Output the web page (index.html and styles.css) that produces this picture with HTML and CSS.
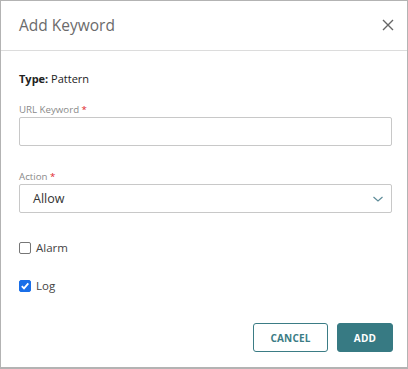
FILE: index.html
```html
<!DOCTYPE html>
<html lang="en">
<head>
    <meta charset="UTF-8">
    <title>Add Keyword</title>
    <link rel="stylesheet" href="styles.css">
</head>
<body>
    <div class="dialog">
        <!-- header -->
        <div class="dialog-header">
            <span class="dialog-title">Add Keyword</span>
            <svg class="close" width="12" height="12" viewBox="0 0 12 12">
                <path d="M1 1 L11 11 M11 1 L1 11" stroke="#666" stroke-width="1.4" fill="none"/>
            </svg>
        </div>

        <div class="dialog-body">
            <div class="type-row"><b>Type:</b> Pattern</div>

            <div class="field">
                <label class="field-label">URL Keyword <span class="req">*</span></label>
                <div class="input"></div>
            </div>

            <div class="field action-field">
                <label class="field-label">Action <span class="req">*</span></label>
                <div class="input dropdown">
                    <span class="dropdown-value">Allow</span>
                    <svg width="12" height="8" viewBox="0 0 12 8">
                        <path d="M1.5 2 L6 6 L10.5 2" stroke="#5e8c99" stroke-width="1.2" fill="none"/>
                    </svg>
                </div>
            </div>

            <div class="check-row alarm">
                <span class="box"></span>
                <span>Alarm</span>
            </div>
            <div class="check-row log">
                <span class="box checked">
                    <svg width="10" height="10" viewBox="0 0 10 10">
                        <path d="M1.8 5.2 L4 7.4 L8.3 2.4" stroke="#fff" stroke-width="1.8" fill="none"/>
                    </svg>
                </span>
                <span>Log</span>
            </div>
        </div>

        <div class="dialog-footer">
            <button class="btn btn-outline">CANCEL</button>
            <button class="btn btn-primary">ADD</button>
        </div>
    </div>
</body>
</html>
```

FILE: styles.css
```css
body {
    margin: 0;
    padding: 0;
    background: #fff;
    font-family: "Open Sans", "Noto Sans", sans-serif;
}

/* dialog frame */
.dialog {
    width: 408px;
    height: 369px;
    box-sizing: border-box;
    border: 1px solid #b3b3b3;
    border-bottom-width: 2px;
    background: #fff;
    display: flex;
    flex-direction: column;
}

.dialog-header {
    height: 50px;
    box-sizing: border-box;
    padding: 0 13px 2px 18px;
    display: flex;
    justify-content: space-between;
    align-items: center;
    border-bottom: 1px solid #dcdcdc;
}

.dialog-title {
    font-size: 15.5px;
    color: #6b6b6b;
}

.close {
    margin-top: 1px;
}

.dialog-body {
    padding: 19px 15px 0 18px;
    display: flex;
    flex-direction: column;
}

.type-row {
    font-size: 11px;
    line-height: 18px;
    color: #222;
}

.type-row b {
    font-weight: 700;
}

.field {
    margin-top: 14px;
    display: flex;
    flex-direction: column;
}

.action-field {
    margin-top: 23px;
}

.field-label {
    font-size: 9.7px;
    line-height: 15px;
    color: #8a8a8a;
}

.req {
    color: #e0262b;
}

.input {
    height: 29px;
    box-sizing: border-box;
    border: 1px solid #c8c8c8;
    border-radius: 2px;
}

.dropdown {
    display: flex;
    align-items: center;
    padding-right: 7px;
}

.dropdown-value {
    flex: 1;
    margin-left: 13px;
    font-size: 12.5px;
    color: #333;
}

/* checkboxes */
.check-row {
    display: flex;
    align-items: center;
    gap: 5px;
    font-size: 11.5px;
    line-height: 18px;
    color: #444;
}

.check-row.alarm {
    margin-top: 26px;
}

.check-row.log {
    margin-top: 20px;
}

.box {
    width: 12px;
    height: 12px;
    box-sizing: border-box;
    border: 1px solid #767676;
    border-radius: 2px;
    display: flex;
    justify-content: center;
    align-items: center;
}

.box.checked {
    background: #1a6fe8;
    border-color: #1a6fe8;
}

/* footer buttons */
.dialog-footer {
    margin-top: 28px;
    padding: 0 14px 0 18px;
    display: flex;
    justify-content: flex-end;
    gap: 9px;
}

.btn {
    height: 29px;
    box-sizing: border-box;
    border-radius: 3px;
    font-family: "Open Sans", "Noto Sans", sans-serif;
    font-size: 10px;
    font-weight: 700;
    letter-spacing: 0.2px;
    cursor: pointer;
}

.btn-outline {
    width: 75px;
    background: #fff;
    border: 1px solid #3b7c85;
    color: #3b7c85;
}

.btn-primary {
    width: 56px;
    background: #377a83;
    border: 1px solid #377a83;
    color: #fff;
}
```
